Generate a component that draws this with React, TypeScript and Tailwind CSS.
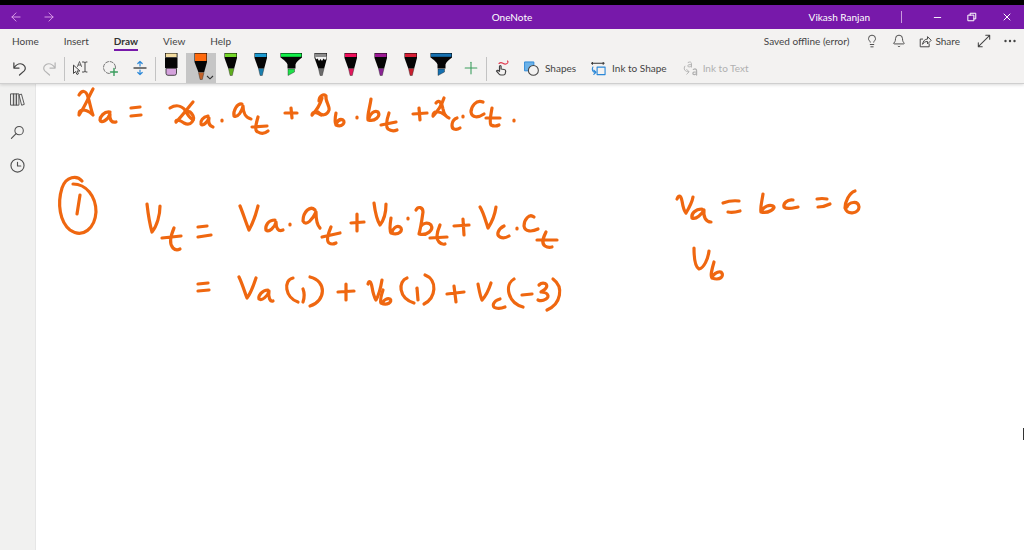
import type { ReactNode } from 'react';
import { ArrowLeft, ArrowRight, Bell, Lightbulb, Minus, Plus, X } from 'lucide-react';

const tabs = ['Home', 'Insert', 'Draw', 'View', 'Help'];

const pens = [
    { name: 'Green pen', kind: 'pen', cap: '#76d82b', tip: '#5fae1e' },
    { name: 'Blue pen', kind: 'pen', cap: '#1c9ad0', tip: '#1a7fae' },
    { name: 'Green highlighter', kind: 'highlighter', cap: '#12f04a', tip: '#1fe04a' },
    { name: 'Pencil', kind: 'pencil', cap: '#8c8c8c', tip: '#6b6b6b' },
    { name: 'Pink pen', kind: 'pen', cap: '#f0105c', tip: '#e0185c' },
    { name: 'Purple pen', kind: 'pen', cap: '#9c1a94', tip: '#8a2494' },
    { name: 'Red pen', kind: 'pen', cap: '#d81f36', tip: '#c8202f' },
    { name: 'Blue highlighter', kind: 'highlighter', cap: '#1570b0', tip: '#1570b0' },
];

// Each entry is one written line, as a list of pen strokes in canvas units
const ink = [
    {
        label: 'Da = Da . at + Db . bt + Dc . ct .',
        strokes: [
            'M79 95C82 90 86 90 88 97C90 103 91 110 93 115',
            'M93 89C89 96 86 105 79 115C78 108 86 109 92 114',
            'M110 112C104 111 100 117 100 120C101 124 108 120 110 114C109 120 112 123 116 122',
            'M131 108L140 107M131 116L141 115',
            'M170 108C175 105 181 105 185 110C187 114 190 118 193 120',
            'M193 102C187 109 182 116 176 122C175 119 180 120 184 123C191 127 196 119 192 114C190 111 187 111 184 113',
            'M208 116C203 117 200 121 201 124C203 127 208 121 209 118C208 123 210 126 213 127',
            'M222 120L222 121',
            'M242 104C237 103 233 111 234 116C238 118 242 111 243 106C243 113 246 118 251 119',
            'M258 117C256 124 254 131 258 132Q263 135 268 131M252 127L267 126',
            'M291 108L292 118M285 113L297 113',
            'M319 101C319 96 324 93 326 96C325 101 330 106 329 110C327 116 321 116 318 112',
            'M322 98C320 105 317 110 312 115C312 111 317 112 321 115',
            'M336 113C335 118 335 123 336 125C342 128 346 122 343 120C339 118 337 122 336 124',
            'M357 117L357 118',
            'M371 99C370 107 367 115 368 120C375 122 381 116 378 112C374 110 370 114 369 118',
            'M389 113C387 119 385 126 388 129Q392 132 397 130M381 125L396 122',
            'M419 108L420 120M413 114L427 113',
            'M436 103C439 99 442 103 443 109C444 114 446 117 449 118',
            'M444 98C442 104 437 112 433 116C433 110 440 111 445 115',
            'M457 118C451 120 451 128 454 129Q457 130 460 128',
            'M463 116L463 117',
            'M483 102C476 99 471 107 471 112C472 118 478 118 484 114',
            'M492 108C491 114 489 122 491 125Q495 127 499 125M486 118L500 118',
            'M514 120L514 121',
        ],
    },
    {
        label: '(1) Vt = Va . at + Vb . bt + Vc . ct',
        strokes: [
            'M82 181C77 175 66 176 62 188C57 204 60 222 70 230C83 239 95 228 96 212C96 196 86 184 73 184',
            'M80 195L77 214',
            'M147 204C148 213 150 225 152 232C157 226 160 215 160 206',
            'M174 228C171 235 169 244 173 248Q176 251 180 249M162 238L181 236',
            'M198 227L207 226M198 237L211 235',
            'M240 206C243 213 246 223 249 230C253 223 256 214 258 206',
            'M275 220C268 220 265 226 266 230C269 233 275 227 276 222C276 228 278 232 283 230',
            'M290 224L290 225',
            'M315 210C310 205 303 212 303 221C306 227 313 219 316 212C316 219 317 225 320 228',
            'M331 227C328 234 326 241 329 243Q332 245 336 243M322 237L340 233',
            'M357 214L357 231M351 223L364 222',
            'M374 203C375 211 377 220 380 225C384 220 386 212 386 204',
            'M391 218C390 224 389 230 391 233C399 236 404 230 400 227C396 225 393 229 392 232',
            'M408 218L408 219',
            'M416 210C418 206 423 207 423 212C422 219 421 227 419 234C427 236 434 230 431 225C428 222 423 223 421 226',
            'M440 225C437 232 436 239 439 242Q442 245 445 244M430 238L447 237',
            'M463 219L464 235M454 226L469 225',
            'M480 207C483 211 486 222 488 228C492 222 495 214 496 207',
            'M504 226C498 229 496 235 500 237Q504 239 509 236',
            'M517 228L517 229',
            'M534 217C529 213 524 220 524 226C525 232 532 232 538 229',
            'M546 232C543 238 541 243 545 246Q548 248 552 247M537 240L557 240',
        ],
    },
    {
        label: '= Va (1) + Vb (1) + Vc (-3)',
        strokes: [
            'M198 284L208 283M198 291L209 290',
            'M239 277C242 283 245 293 247 298C251 293 254 284 256 278',
            'M268 290C262 290 258 296 259 299C262 301 268 296 269 291C268 297 270 302 273 301',
            'M293 278C283 280 285 298 298 302',
            'M303 289C305 294 304 299 303 302',
            'M310 277C327 281 326 301 310 306',
            'M346 284L346 300M338 292L354 291',
            'M368 284C369 280 371 281 372 287C373 293 374 297 376 300C379 295 381 286 382 280',
            'M383 290C381 296 380 301 381 303C387 306 393 302 390 299C387 298 384 300 383 302',
            'M407 278C398 281 398 298 414 303',
            'M417 288L418 300',
            'M425 275C438 280 436 298 424 304',
            'M454 286L456 302M447 294L464 292',
            'M478 284C479 289 480 296 482 300C486 296 489 289 491 283',
            'M500 299C493 301 491 307 496 308Q500 309 505 307',
            'M514 279C504 285 508 303 523 307',
            'M522 295L532 294',
            'M539 285C543 281 549 284 546 288C545 290 542 291 541 292C548 292 550 297 546 299C543 301 540 301 538 300',
            'M553 279C564 287 561 304 547 310',
        ],
    },
    {
        label: 'Va = bc = 6',
        strokes: [
            'M677 199C679 194 681 196 682 201C683 207 684 211 686 213C689 208 692 203 693 197',
            'M702 209C695 209 691 214 692 218C696 220 702 214 704 210C703 217 706 222 711 222',
            'M723 203Q731 200 739 201M728 212Q733 213 740 211',
            'M763 194C762 201 760 208 761 212C768 214 777 208 773 206C769 204 764 207 762 210',
            'M793 200C787 199 783 204 784 207C787 210 793 208 798 207',
            'M817 199Q822 198 827 199M818 207Q824 207 830 204',
            'M855 191C849 193 845 202 845 208C848 216 859 213 859 207C858 200 849 202 847 207',
        ],
    },
    {
        label: 'Vb',
        strokes: [
            'M694 248C694 258 695 267 699 269C704 268 708 259 709 251',
            'M714 262C712 269 710 276 712 278C720 281 725 276 721 272C717 271 713 275 712 277',
        ],
    },
];

const Icon = ({ children, className = 'size-4' }: { children: ReactNode; className?: string }) => (
    <svg
        viewBox="0 0 16 16"
        fill="none"
        stroke="currentColor"
        strokeLinecap="round"
        strokeLinejoin="round"
        className={`shrink-0 ${className}`}
        aria-hidden="true"
    >
        {children}
    </svg>
);

const ToolButton = ({ label, children }: { label: string; children: ReactNode }) => (
    <button type="button" aria-label={label} className="flex h-[30px] w-[30px] shrink-0 items-center justify-center">
        {children}
    </button>
);

const Divider = () => <div className="mt-1 h-6 w-px shrink-0 bg-[#c3c3c3]" />;

const PenIcon = ({ kind, cap, tip }: { kind: string; cap: string; tip: string }) => {
    if (kind === 'highlighter') {
        return (
            <svg viewBox="0 0 30 30" className="size-[30px]" aria-hidden="true">
                <path d="M4.500 0h21.500v4.500c-3 2-6 5-6.500 7v4h-8v-4c-.5-2-4-5-7-7z" fill="#050505" />
                <path d="M5 .5h20.500V3.800H5z" fill={cap} />
                <path d="M12 16h6.500v3l-6.500 3.500z" fill={tip} stroke="#222" strokeWidth=".4" />
            </svg>
        );
    }
    return (
        <svg viewBox="0 0 30 30" className="size-[30px]" aria-hidden="true">
            <path d="M8.500 0H21v5l-2.800 10.500h-5.900L8.500 5z" fill="#050505" />
            {kind === 'pencil' ? (
                <path d="M9 3.500h11.500v2l-1.500 1.500-1.500-1.500-1.500 2.500-1.500-2-1.500 2-1.500-2.500-1.500 1z" fill="#f2f2f2" />
            ) : null}
            <path d="M9 .5h11.500v3.500H9z" fill={cap} />
            <path d="M12.500 15.500h5.500l-1.700 7h-2.200z" fill={tip} stroke="#222" strokeWidth=".4" />
        </svg>
    );
};

const TitleBar = () => (
    <div className="grid h-6 grid-cols-3 items-center bg-[#7719aa] text-white">
        <div className="flex items-center gap-[19px] pl-[9px]">
            <button type="button" aria-label="Back">
                <ArrowLeft size={14} strokeWidth={1.5} className="text-[#e3a8ee]" />
            </button>
            <button type="button" aria-label="Forward">
                <ArrowRight size={14} strokeWidth={1.5} className="text-[#e3a8ee]" />
            </button>
        </div>
        <h1 className="text-center">OneNote</h1>
        <div className="flex items-center justify-end pr-[11px]">
            <span>Vikash Ranjan</span>
            <span className="ml-[31px] h-3 w-px bg-[#c99add]" />
            <button type="button" aria-label="Minimize" className="ml-[30px]">
                <Minus size={11} strokeWidth={2} />
            </button>
            <button type="button" aria-label="Restore" className="ml-6">
                <Icon className="size-[10px]">
                    <path d="M2 5h9v9H2zM5 5V2h9v9h-3" strokeWidth="1.600" />
                </Icon>
            </button>
            <button type="button" aria-label="Close" className="ml-6">
                <X size={12} strokeWidth={2} />
            </button>
        </div>
    </div>
);

const TabRow = () => (
    <div className="flex h-6 items-center justify-between pr-2 pl-3 text-[#444]">
        <nav className="flex gap-[25px]">
            {tabs.map((tab) => (
                <a
                    key={tab}
                    href="#"
                    className={
                        tab === 'Draw'
                            ? 'border-b-2 border-[#7719aa] pt-[2px] font-bold text-[#333]'
                            : 'border-b-2 border-transparent pt-[2px]'
                    }
                >
                    {tab}
                </a>
            ))}
        </nav>
        <div className="flex items-center">
            <span>Saved offline (error)</span>
            <button type="button" aria-label="Tell me" className="ml-4">
                <Lightbulb size={14} strokeWidth={1.6} />
            </button>
            <button type="button" aria-label="Notifications" className="ml-[13px]">
                <Bell size={14} strokeWidth={1.6} />
            </button>
            <button type="button" className="ml-[13px] flex items-center gap-[3px]">
                <Icon className="size-[13px]">
                    <path d="M4.500 5H1.500v9.500h11V11M4.500 11c.5-4 3-6 6-6V2l4.500 4.500L10.500 11V8c-3 0-4.500 1-6 3z" strokeWidth="1.200" />
                </Icon>
                Share
            </button>
            <button type="button" aria-label="Full screen" className="ml-[17px]">
                <Icon className="size-[14px]">
                    <path d="M1.500 14.500l13-13M10 1.500h4.500V6M1.500 10v4.500H6" strokeWidth="1.200" />
                </Icon>
            </button>
            <button type="button" aria-label="More" className="ml-[13px]">
                <svg viewBox="0 0 12 4" className="h-1 w-3" fill="currentColor" aria-hidden="true">
                    <circle cx="1.500" cy="2" r="1.200" />
                    <circle cx="6" cy="2" r="1.200" />
                    <circle cx="10.500" cy="2" r="1.200" />
                </svg>
            </button>
        </div>
    </div>
);

const Toolbar = () => (
    <div className="flex h-[30px] pl-1 text-[#444]">
        <ToolButton label="Undo">
            <Icon className="size-[15px]">
                <path d="M2 2v5.500h5.500M2 7.500C5 3 9 2 12 4c3 2.200 2.500 5 1 6.500L8 15" strokeWidth="1.300" />
            </Icon>
        </ToolButton>
        <ToolButton label="Redo">
            <Icon className="size-[15px] text-[#b5b5b5]">
                <path d="M14 2v5.500H8.500M14 7.500C11 3 7 2 4 4c-3 2.200-2.500 5-1 6.500L8 15" strokeWidth="1.300" />
            </Icon>
        </ToolButton>
        <Divider />
        <ToolButton label="Select objects or type text">
            <Icon>
                <path d="M1.500 5.500v8l2-2 1.500 3 1.500-.8-1.500-2.700h2.500z" />
                <path d="M5.500 6.500l2-5 2 5M6.200 5h2.600" strokeWidth=".8" />
                <path d="M10.500 2h1.500q.7 0 1 .7.300-.7 1-.7h1M10.500 12h1.500q.7 0 1-.7.300.7 1 .7h1M13 2.700v8.600" />
            </Icon>
        </ToolButton>
        <ToolButton label="Lasso select">
            <Icon>
                <circle cx="7.500" cy="7.500" r="6" strokeDasharray="3 1.700" strokeWidth="1" stroke="#777" />
                <path d="M8.500 9h7v7h-7z" fill="#f3f2f1" stroke="none" />
                <path d="M12 8.500v7M8.500 12h7" stroke="#3a9d5d" strokeWidth="1.400" />
            </Icon>
        </ToolButton>
        <ToolButton label="Insert or remove space">
            <Icon>
                <path d="M1.500 8h13" stroke="#767676" strokeWidth="2" strokeLinecap="butt" />
                <path d="M8 6V1.500M5.800 3.500L8 1.500l2.200 2M8 10v4.500M5.800 12.500l2.200 2 2.200-2" stroke="#2b88d8" strokeWidth="1.200" />
            </Icon>
        </ToolButton>
        <Divider />
        <ToolButton label="Eraser">
            <svg viewBox="0 0 30 30" className="size-[30px]" aria-hidden="true">
                <path d="M9 0h12.500v4.500H9z" fill="#050505" />
                <path d="M9.700 .5h11V4h-11z" fill="#f3dca0" />
                <path d="M9 4.500h12.500v10.500H9z" fill="#050505" />
                <path d="M10 15.300h10.500v5q0 2-2 2H12q-2 0-2-2z" fill="#d4a2dc" stroke="#222" strokeWidth=".8" />
            </svg>
        </ToolButton>
        <button type="button" aria-label="Orange pen" className="h-[30px] w-[30px] shrink-0 bg-[#c6c6c6]">
            <svg viewBox="0 0 30 30" className="size-[30px]" aria-hidden="true">
                <path d="M8.500 0H21v9l-2.800 10h-5.900L8.500 9z" fill="#050505" />
                <path d="M9 .5h11.500v7.500H9z" fill="#ff6a0d" />
                <path d="M12.500 19.500h5.500l-1.700 7h-2.200z" fill="#c2622a" stroke="#222" strokeWidth=".4" />
                <path d="M21 23l3 2.800 3-2.800" fill="none" stroke="#333" strokeWidth="1.100" />
            </svg>
        </button>
        {pens.map((pen) => (
            <ToolButton key={pen.name} label={pen.name}>
                <PenIcon kind={pen.kind} cap={pen.cap} tip={pen.tip} />
            </ToolButton>
        ))}
        <ToolButton label="Add pen">
            <Plus size={20} strokeWidth={1.3} className="text-[#3a9d5d]" />
        </ToolButton>
        <Divider />
        <ToolButton label="Draw with touch">
            <Icon>
                <path d="M5.500 11V6.500q0-1 .8-1t.8 1V9l3 .5q1.700.3 1.600 1.700l-.4 2.300q-.3 1.500-2 1.500H7Q5.800 15 5 14l-2.500-3q.8-1.300 3 .3" strokeWidth="1.200" />
                <path d="M5 3.500c3-3 4 1.500 7 .5 2-.7 2.500-2 1.500-3" stroke="#e03c50" strokeWidth="1.100" />
            </Icon>
        </ToolButton>
        <button type="button" className="ml-[7px] flex items-center gap-[6px]">
            <Icon className="size-[15px]">
                <path d="M1 1h9.500v9.500H1z" fill="#6cb2e8" stroke="#2b88d8" />
                <circle cx="10" cy="10" r="5.300" fill="#f3f2f1" strokeWidth="1.100" />
            </Icon>
            Shapes
        </button>
        <button type="button" className="ml-[15px] flex items-center gap-[6px]">
            <Icon className="size-[15px]">
                <path d="M1.500 1v3M13 1v3M0 2.500h14.500" stroke="#333" strokeLinecap="butt" strokeWidth="1.100" />
                <path d="M6.500 6.500h8.500v8H6.500z" stroke="#2b88d8" strokeWidth="1.200" />
                <path d="M2 6.500c-1.500 3 0 5.500 2.500 5.500M3 9.800L5.300 12 3 14.200" stroke="#2b88d8" strokeWidth="1.200" />
            </Icon>
            Ink to Shape
        </button>
        <button type="button" disabled className="ml-4 flex items-center gap-[5px] text-[#b0b0b0]">
            <Icon className="size-[15px]">
                <path d="M5.500 1.500c2-1 3.500-.5 3.500 1.500v3.500M9 4C6.500 3.500 5 4.200 5 5.300S7.500 7 9 5.300" />
                <path d="M11 9c2-1 3.500-.5 3.500 1.500V15M14.500 12c-2.500-.7-4 0-4 1.300s2.500 1.700 4 0" strokeWidth="1.300" />
                <path d="M2 5.500C0 8.500 2 11.500 6 11.500M4 9l2.500 2.500L4 14" />
            </Icon>
            Ink to Text
        </button>
    </div>
);

const Sidebar = () => (
    <aside className="flex w-9 shrink-0 flex-col items-center gap-[18px] border-r border-[#e6e6e6] bg-[#f1f1f0] pt-2 text-[#505050]">
        <button type="button" aria-label="Show notebooks">
            <Icon className="size-[15px]">
                <path d="M1 2h3v12H1zM4 2h3v12H4zM7 2h2.500v12H7zM10 3l2.200-.8 3 11-2.400.8z" />
            </Icon>
        </button>
        <button type="button" aria-label="Search">
            <Icon className="size-[15px]">
                <circle cx="9.700" cy="6" r="4.500" strokeWidth="1.100" />
                <path d="M6.500 9.200L1.500 14.300" strokeWidth="1.200" />
            </Icon>
        </button>
        <button type="button" aria-label="Recent notes">
            <Icon className="size-[15px]">
                <circle cx="8" cy="8" r="7" strokeWidth="1.200" />
                <path d="M8 4.500V8.500h3.500" strokeWidth="1.200" />
            </Icon>
        </button>
    </aside>
);

const InkCanvas = () => (
    <main className="relative min-w-0 flex-1 overflow-hidden bg-white">
        <svg
            viewBox="36 84 860 240"
            className="h-60 w-[860px] max-w-none"
            fill="none"
            stroke="#ef6710"
            strokeWidth="3.200"
            strokeLinecap="round"
            strokeLinejoin="round"
        >
            {ink.map((line) => (
                <g key={line.label} role="img" aria-label={line.label}>
                    {line.strokes.map((d) => (
                        <path key={d} d={d} />
                    ))}
                </g>
            ))}
        </svg>
        <div className="absolute top-[344px] right-0 h-3 w-px bg-[#333]" />
    </main>
);

export default function App() {
    return (
        <div className="flex min-h-screen flex-col bg-white font-['Lato','Noto_Sans',sans-serif] text-[10px] leading-4">
            <header className="z-10 border-t-[5px] border-b border-t-black border-b-[#cfcfcf] bg-[#f3f2f1] shadow-[0_1px_3px_rgba(0,0,0,0.15)]">
                <TitleBar />
                <TabRow />
                <Toolbar />
            </header>
            <div className="flex flex-1">
                <Sidebar />
                <InkCanvas />
            </div>
        </div>
    );
}
